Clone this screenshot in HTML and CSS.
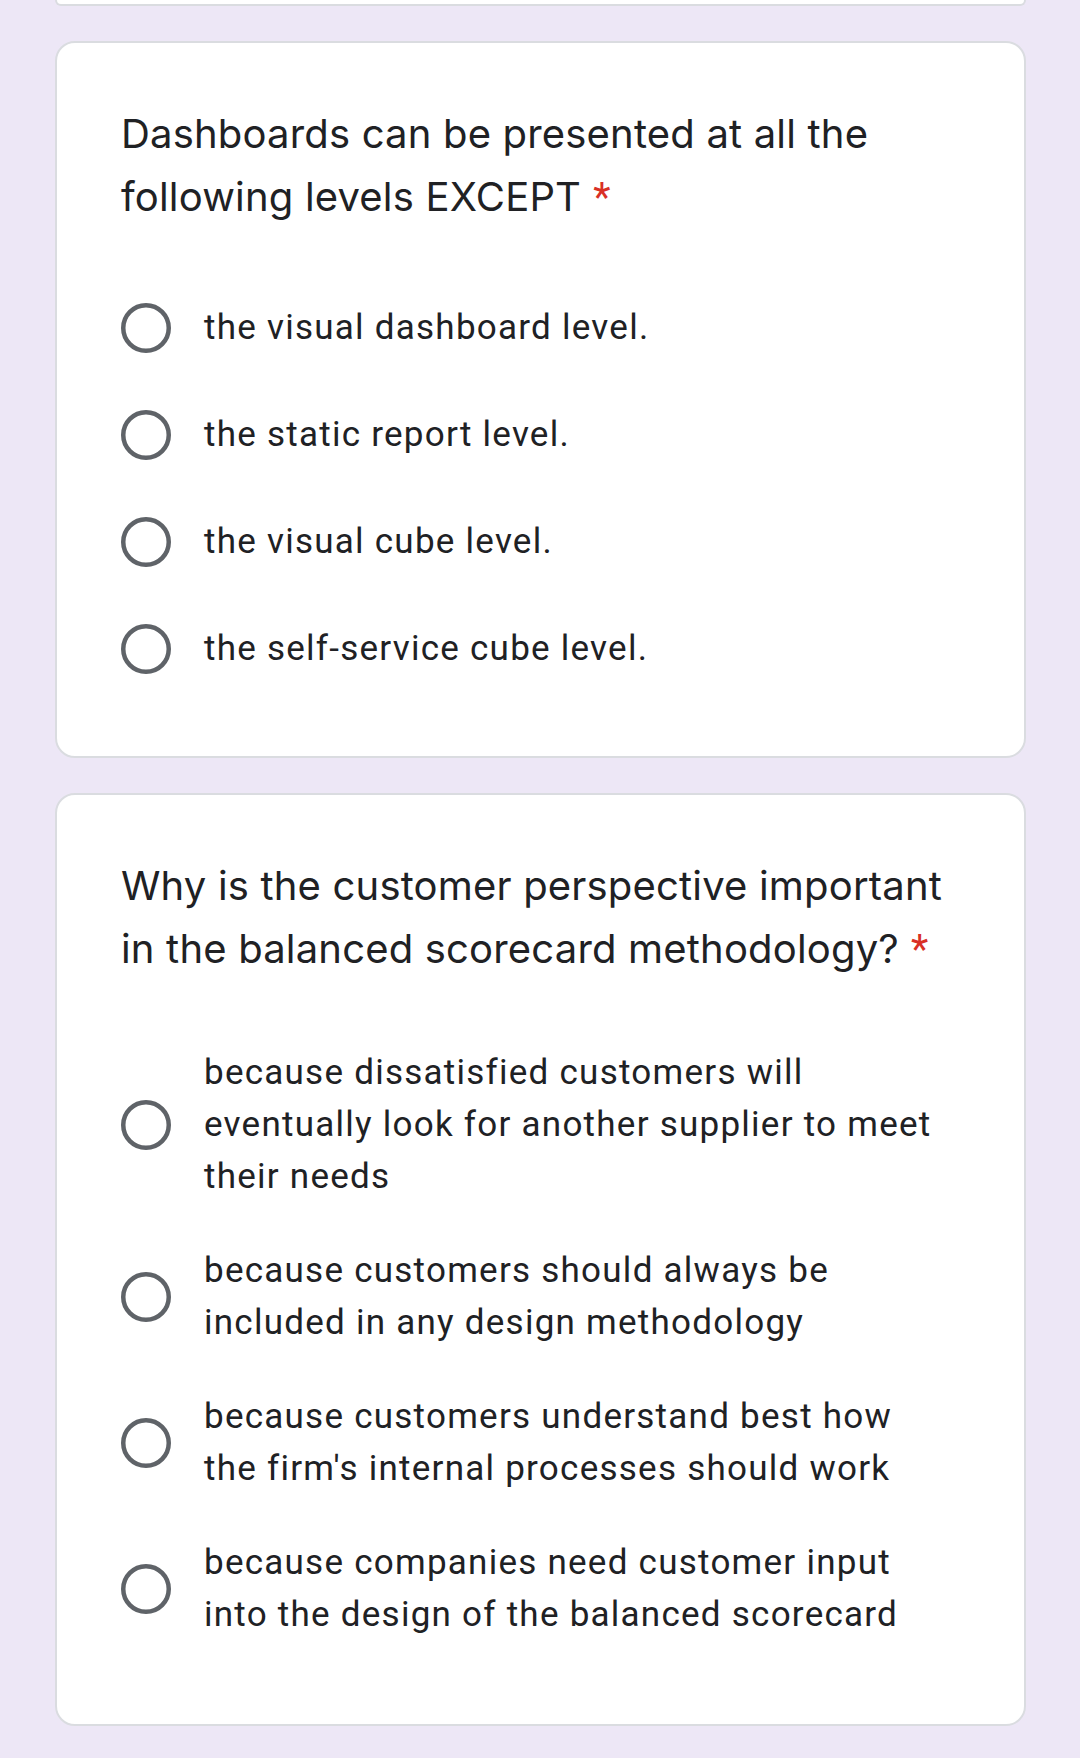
FILE: index.html
```html
<!DOCTYPE html>
<html lang="en">
<head>
<meta charset="utf-8">
<title>Form</title>
<link rel="stylesheet" href="styles.css">
</head>
<body>
<div class="page">
  <div class="card-stub"></div>

  <section class="card card--short">
    <h2 class="question"><span class="question-text">Dashboards can be presented at all the following levels EXCEPT</span><span class="required">*</span></h2>
    <div class="options">
      <label class="option">
        <span class="radio"><svg viewBox="0 0 50 50" width="50" height="50"><circle cx="25" cy="25" r="22.75" fill="none" stroke="#5f6368" stroke-width="4.5"/></svg></span>
        <span class="option-text">the visual dashboard level.</span>
      </label>
      <label class="option">
        <span class="radio"><svg viewBox="0 0 50 50" width="50" height="50"><circle cx="25" cy="25" r="22.75" fill="none" stroke="#5f6368" stroke-width="4.5"/></svg></span>
        <span class="option-text">the static report level.</span>
      </label>
      <label class="option">
        <span class="radio"><svg viewBox="0 0 50 50" width="50" height="50"><circle cx="25" cy="25" r="22.75" fill="none" stroke="#5f6368" stroke-width="4.5"/></svg></span>
        <span class="option-text">the visual cube level.</span>
      </label>
      <label class="option">
        <span class="radio"><svg viewBox="0 0 50 50" width="50" height="50"><circle cx="25" cy="25" r="22.75" fill="none" stroke="#5f6368" stroke-width="4.5"/></svg></span>
        <span class="option-text">the self-service cube level.</span>
      </label>
    </div>
  </section>

  <section class="card">
    <h2 class="question"><span class="question-text">Why is the customer perspective important in the balanced scorecard methodology?</span><span class="required">*</span></h2>
    <div class="options">
      <label class="option">
        <span class="radio"><svg viewBox="0 0 50 50" width="50" height="50"><circle cx="25" cy="25" r="22.75" fill="none" stroke="#5f6368" stroke-width="4.5"/></svg></span>
        <span class="option-text">because dissatisfied customers will eventually look for another supplier to meet their needs</span>
      </label>
      <label class="option">
        <span class="radio"><svg viewBox="0 0 50 50" width="50" height="50"><circle cx="25" cy="25" r="22.75" fill="none" stroke="#5f6368" stroke-width="4.5"/></svg></span>
        <span class="option-text">because customers should always be included in any design methodology</span>
      </label>
      <label class="option">
        <span class="radio"><svg viewBox="0 0 50 50" width="50" height="50"><circle cx="25" cy="25" r="22.75" fill="none" stroke="#5f6368" stroke-width="4.5"/></svg></span>
        <span class="option-text">because customers understand best how the firm's internal processes should work</span>
      </label>
      <label class="option">
        <span class="radio"><svg viewBox="0 0 50 50" width="50" height="50"><circle cx="25" cy="25" r="22.75" fill="none" stroke="#5f6368" stroke-width="4.5"/></svg></span>
        <span class="option-text">because companies need customer input into the design of the balanced scorecard</span>
      </label>
    </div>
  </section>

  <div class="card-stub card-stub--next"></div>
</div>
</body>
</html>
```
FILE: styles.css
```css
html, body {
  margin: 0;
  padding: 0;
  background: #ede7f6;
}
body {
  height: 1758px;
  overflow: hidden;
  font-family: Roboto, "Liberation Sans", Arial, sans-serif;
  color: #202124;
}
.page {
  padding: 0 54px 0 55px;
}
.card-stub {
  height: 4px;
  background: #fff;
  border: 2px solid #dadce0;
  border-top: none;
  border-radius: 0 0 20px 20px;
}
.card-stub--next {
  margin-top: 33px;
  height: 20px;
  border-top: 2px solid #dadce0;
  border-bottom: none;
  border-radius: 20px 20px 0 0;
}
.card {
  margin-top: 35px;
  background: #fff;
  border: 2px solid #dadce0;
  border-radius: 20px;
  padding: 59px 64px 83px 64px;
}
.card--short {
  padding-bottom: 75px;
}
.question {
  margin: 0;
  font-family: Inter, "Open Sans", sans-serif;
  font-weight: 400;
  font-size: 40px;
  line-height: 63px;
  letter-spacing: 0.18px;
  color: #202124;
}
.required {
  font-family: Roboto, sans-serif;
  font-size: 40px;
  letter-spacing: 0;
  color: #d93025;
  padding-left: 12px;
}
.options {
  margin-top: 66px;
  display: flex;
  flex-direction: column;
  gap: 42px;
}
.option {
  display: flex;
  align-items: center;
  min-height: 65px;
  padding-right: 18px;
}
.radio {
  flex: none;
  width: 50px;
  height: 50px;
  margin-right: 33px;
}
.radio svg {
  display: block;
}
.option-text {
  font-family: Roboto, sans-serif;
  font-size: 35px;
  line-height: 52px;
  letter-spacing: 1.25px;
  color: #202124;
}
```
